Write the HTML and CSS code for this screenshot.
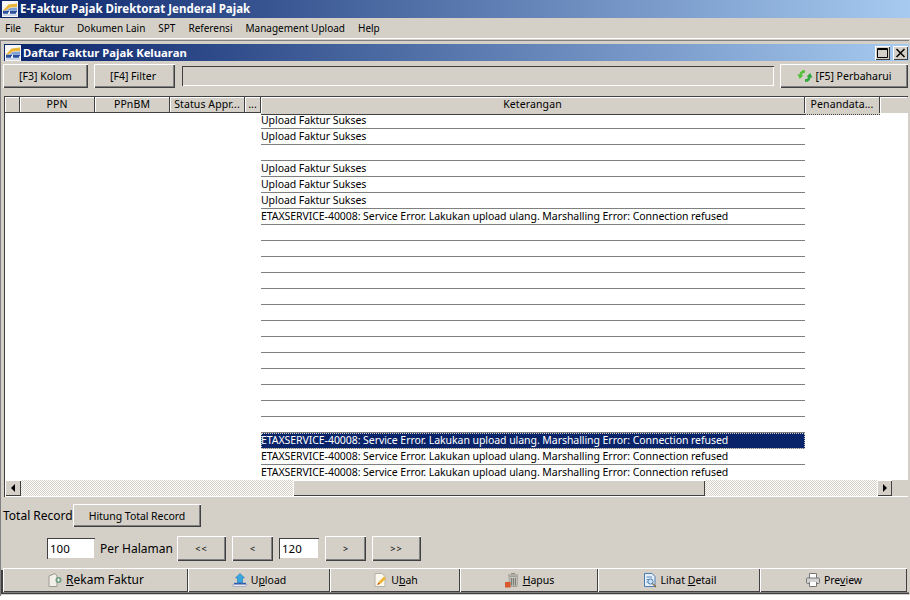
FILE: index.html
```html
<!DOCTYPE html>
<html lang="id">
<head>
<meta charset="utf-8">
<title>E-Faktur Pajak</title>
<link rel="stylesheet" href="styles.css">
</head>
<body>
<svg class="defs" width="0" height="0" aria-hidden="true">
  <symbol id="logo" viewBox="0 0 16 16">
    <rect width="16" height="16" fill="#f6f6f6"/>
    <path d="M1 9.5 L6.5 3.5 L15 2.5 L15 6 L8 6.5 L3.5 9.5Z" fill="#e9b437"/>
    <path d="M4 9.5 L8 7 L15 6.5 L15 9.5Z" fill="#7f9fd8"/>
    <path d="M1 10.5H7M1 12H6M8 10.5H15M8 12H14" stroke="#2a4f9c" stroke-width="1.3"/>
    <path d="M1 14H15" stroke="#9fb4dc"/>
  </symbol>
</svg>

<div class="shell">
<header class="app-title">
  <svg class="logo" width="16" height="16"><use href="#logo"/></svg>
  <span>E-Faktur Pajak Direktorat Jenderal Pajak</span>
</header>

<nav class="menu">
  <span>File</span><span>Faktur</span><span>Dokumen Lain</span><span>SPT</span><span>Referensi</span><span>Management Upload</span><span>Help</span>
</nav>

<main class="frame">
  <div class="win-title">
    <svg class="logo" width="16" height="16"><use href="#logo"/></svg>
    <span class="win-name">Daftar Faktur Pajak Keluaran</span>
    <button class="win-btn" aria-label="Maximize"><svg width="11" height="10" viewBox="0 0 11 10"><path d="M0.5 0.5H10.5V9.5H0.5Z M0.5 1.5H10.5" fill="none" stroke="#000"/></svg></button>
    <button class="win-btn" aria-label="Close"><svg width="11" height="10" viewBox="0 0 11 10"><path d="M1.5 1L9.5 9M9.5 1L1.5 9" fill="none" stroke="#000" stroke-width="1.5"/></svg></button>
  </div>

  <div class="toolbar">
    <button class="btn t-kolom">[F3] Kolom</button>
    <button class="btn t-filter">[F4] Filter</button>
    <div class="sunken-field"></div>
    <button class="btn t-refresh">
      <svg width="16" height="16" viewBox="0 0 16 16"><path d="M8 2A6 6 0 0 0 2.3 6.6L0.5 6.2L2.8 11L6.3 7.4L4.6 7A3.6 3.6 0 0 1 8 4.8Z" fill="#55c03a"/><path d="M8 14A6 6 0 0 0 13.7 9.4L15.5 9.8L13.2 5L9.7 8.6L11.4 9A3.6 3.6 0 0 1 8 11.2Z" fill="#2fa83e"/></svg>
      [F5] Perbaharui
    </button>
  </div>

  <div class="table">
    <div class="thead">
      <div class="th"></div>
      <div class="th">PPN</div>
      <div class="th">PPnBM</div>
      <div class="th">Status Appr...</div>
      <div class="th th-tiny">...</div>
      <div class="th th-open">Keterangan</div>
      <div class="th th-open">Penandata...</div>
      <div class="th th-open"></div>
    </div>
    <div class="tbody">
      <div class="rows">
        <div class="row first">Upload Faktur Sukses</div>
        <div class="row">Upload Faktur Sukses</div>
        <div class="row"></div>
        <div class="row">Upload Faktur Sukses</div>
        <div class="row">Upload Faktur Sukses</div>
        <div class="row">Upload Faktur Sukses</div>
        <div class="row">ETAXSERVICE-40008: Service Error. Lakukan upload ulang. Marshalling Error: Connection refused</div>
        <div class="row"></div><div class="row"></div><div class="row"></div><div class="row"></div><div class="row"></div>
        <div class="row"></div><div class="row"></div><div class="row"></div><div class="row"></div><div class="row"></div>
        <div class="row"></div><div class="row"></div><div class="row"></div>
        <div class="row selected">ETAXSERVICE-40008: Service Error. Lakukan upload ulang. Marshalling Error: Connection refused</div>
        <div class="row">ETAXSERVICE-40008: Service Error. Lakukan upload ulang. Marshalling Error: Connection refused</div>
        <div class="row last">ETAXSERVICE-40008: Service Error. Lakukan upload ulang. Marshalling Error: Connection refused</div>
      </div>
      <div class="peek"></div>
    </div>
    <div class="hscroll">
      <div class="arrow"><svg width="5" height="8" viewBox="0 0 5 8"><path d="M4 0V8L0 4Z"/></svg></div>
      <div class="track track-left"></div>
      <div class="thumb"></div>
      <div class="track track-right"></div>
      <div class="arrow arrow-right"><svg width="5" height="8" viewBox="0 0 5 8"><path d="M1 0V8L5 4Z"/></svg></div>
      <div class="corner"></div>
    </div>
  </div>

  <div class="total-row">
    <span class="total-label">Total Record</span>
    <button class="btn b-hitung">Hitung Total Record</button>
  </div>

  <div class="page-row">
    <div class="input i-size">100</div>
    <span class="per">Per Halaman</span>
    <button class="btn b-nav-wide">&lt;&lt;</button>
    <button class="btn b-nav">&lt;</button>
    <div class="input i-page">120</div>
    <button class="btn b-nav">&gt;</button>
    <button class="btn b-nav-wide">&gt;&gt;</button>
  </div>

  <div class="actions">
    <button class="action a1">
      <svg width="16" height="16" viewBox="0 0 16 16"><path d="M2 4L8 1.5L10 4V14.5H2Z" fill="#f1efe8" stroke="#9a9a92"/><circle cx="11.5" cy="8" r="3" fill="#6f9d7e"/><path d="M10 8H13M11.5 6.5V9.5" stroke="#fff"/></svg>
      <span><u>R</u>ekam Faktur</span>
    </button>
    <button class="action a2">
      <svg width="16" height="16" viewBox="0 0 16 16"><path d="M1 12.5H15L13.5 14.5H1Z" fill="#e8e8f0" stroke="#8b93b5" stroke-width=".6"/><path d="M8 1.5L12.5 6H10.5V10.5H5.5V6H3.5Z" fill="#39a6e0" stroke="#1d76b4" stroke-width=".6"/><path d="M2 11.5H14" stroke="#2c5fb0" stroke-width="1.4"/></svg>
      <span>U<u>p</u>load</span>
    </button>
    <button class="action a3">
      <svg width="16" height="16" viewBox="0 0 16 16"><path d="M3 1.5H10L13 4.5V14.5H3Z" fill="#fbf9ee" stroke="#b4b2a6"/><path d="M5 13L7 9.5L12 4.5L14 6.5L9 11.5Z" fill="#efb53a"/><path d="M5 13L6.6 10.4L7.9 11.9Z" fill="#c9521f"/></svg>
      <span>U<u>b</u>ah</span>
    </button>
    <button class="action a4">
      <svg width="16" height="16" viewBox="0 0 16 16"><path d="M4 3H14M7 1.5H11" stroke="#8d8d87" stroke-width="1.2"/><path d="M5 4.5H13.5L13 14.5H5.5Z" fill="#c8c8c0" stroke="#8d8d87" stroke-width=".7"/><path d="M7.3 6V13.5M9.3 6V13.5M11.3 6V13.5" stroke="#6d6d68"/><rect x="1" y="10" width="5.5" height="5.5" fill="#d9582b"/></svg>
      <span><u>H</u>apus</span>
    </button>
    <button class="action a5">
      <svg width="16" height="16" viewBox="0 0 16 16"><path d="M2.5 1.5H10L13 4.5V14.5H2.5Z" fill="#e6effa" stroke="#4a7cb0"/><path d="M4.5 5H10M4.5 7.5H10M4.5 10H8" stroke="#5a8ac0"/><circle cx="8.5" cy="9.5" r="2.6" fill="#cfe3f6" stroke="#4a7cb0"/><path d="M10.5 11.5L14 15" stroke="#8a6a3a" stroke-width="1.3"/></svg>
      <span>Lihat <u>D</u>etail</span>
    </button>
    <button class="action a6">
      <svg width="16" height="16" viewBox="0 0 16 16"><path d="M4.5 6V1.5H11.5V6" fill="#fff" stroke="#77777a"/><rect x="1.5" y="6" width="13" height="5.5" rx="1" fill="#d2d2d0" stroke="#77777a"/><path d="M4.5 10V14.5H11.5V10" fill="#fff" stroke="#77777a"/></svg>
      <span>Pre<u>v</u>iew</span>
    </button>
  </div>
</main>
</div>
</body>
</html>
```

FILE: styles.css
```css
* { box-sizing: border-box; }
html, body { margin: 0; height: 600px; overflow: hidden; background: #fff; }
body {
  color: #000;
  font: 10.5px/16px "Noto Sans", sans-serif;
  width: 910px;
}
.defs { display: block; height: 0; }
button { font: inherit; color: inherit; padding: 0; margin: 0; background: #d4d0c8; }

.shell {
  height: 595px;
  background: #d4d0c8;
}

.app-title {
  height: 18px;
  display: flex;
  align-items: center;
  gap: 2px;
  padding-left: 2px;
  background: linear-gradient(90deg, #0a246a, #a6caf0);
  color: #fff;
  font: bold 11.5px/16px "Noto Sans", sans-serif;
}
.logo { flex: none; }

.menu {
  height: 21px;
  display: flex;
  align-items: center;
  gap: 13px;
  padding: 0 0 1px 5px;
  border-bottom: 1px solid #fff;
  font-size: 10px;
}

.frame {
  height: 556px;
  margin: 1px 1px 0 0;
  padding: 0 0 0 3px;
  border-top: 1px solid #808080;
  border-left: 1px solid #808080;
  display: flex;
  flex-direction: column;
}

.win-title {
  height: 17px;
  margin-top: 3px;
  display: flex;
  align-items: center;
  gap: 3px;
  padding: 0 1px 0 1px;
  background: linear-gradient(90deg, #0a246a, #a6caf0);
  color: #fff;
  font: bold 11.3px/16px "Noto Sans", sans-serif;
}
.win-name { flex: 1; margin-left: -1px; }
.win-btn {
  width: 15px;
  height: 14px;
  display: flex;
  align-items: center;
  justify-content: center;
  border: 0;
  flex: none;
  box-shadow: inset 1px 1px 0 #fff, inset -1px -1px 0 #404040;
}

.btn {
  height: 24px;
  border: 0;
  background: #d4d0c8;
  box-shadow: inset 1px 1px 0 #fff, inset -1px -1px 0 #404040, inset -2px -2px 0 #808080;
  display: flex;
  align-items: center;
  justify-content: center;
  gap: 3px;
  flex: none;
}

.toolbar {
  height: 24px;
  margin: 3px 0 0 -1px;
  display: flex;
  align-items: center;
  gap: 6px;
}
.t-kolom { width: 85px; }
.t-filter { width: 81px; padding-right: 3px; }
.sunken-field {
  flex: none;
  width: 592px;
  height: 20px;
  margin-left: 1px;
  box-shadow: inset 1px 1px 0 #404040, inset -1px -1px 0 #fff;
}
.t-refresh { width: 128px; }

.table {
  margin: 8px 0 0 0;
  width: 904px;
  border-top: 1px solid #404040;
  border-left: 1px solid #404040;
  display: flex;
  flex-direction: column;
}
.thead {
  display: grid;
  grid-template-columns: 15px 75px 75px 75px 16px 544px 75px 27px;
  height: 16px;
}
.th {
  text-align: center;
  line-height: 15px;
  white-space: nowrap;
  overflow: hidden;
  letter-spacing: .1px;
  border-right: 1px solid #404040;
  box-shadow: inset 1px 1px 0 #fff;
  border-bottom: 1px solid #404040;
}
.th-open { border-bottom: 0; }
.th:last-child { border-right: 0; }

.tbody {
  height: 367px;
  background: #fff;
  overflow: hidden;
  padding-left: 256px;
  display: flex;
  align-items: flex-start;
}
.rows { width: 544px; flex: none; }
.peek {
  width: 75px;
  height: 2px;
  background: #d4d0c8;
  border-bottom: 1px dotted #404040;
}
.row {
  height: 16px;
  line-height: 15px;
  border-bottom: 1px solid #808080;
  white-space: nowrap;
  letter-spacing: -.06px;
}
.row.first { border-top: 1px solid #d4d0c8; box-shadow: inset 0 1px 0 #404040; line-height: 12px; }
.row.last { border-bottom: 0; }
.row.selected { background: #0a246a; color: #fff; outline: 1px dotted #d4d0c8; outline-offset: -1px; }

.hscroll {
  height: 17px;
  display: flex;
  background: #d4d0c8;
  border-bottom: 1px solid #fff;
}
.arrow {
  width: 16px;
  display: flex;
  align-items: center;
  justify-content: center;
  box-shadow: inset 1px 1px 0 #fff, inset -1px -1px 0 #404040;
  flex: none;
}
.arrow-right { width: 15px; }
.track {
  background: conic-gradient(#d4d0c8 25%, #fff 0 50%, #d4d0c8 0 75%, #fff 0) 0 0 / 2px 2px;
}
.track-left { width: 272px; }
.track-right { width: 172px; }
.thumb {
  width: 412px;
  box-shadow: inset 1px 1px 0 #fff, inset -1px -1px 0 #404040;
}
.corner { flex: 1; }

.total-row {
  margin: 7px 0 0 -1px;
  height: 23px;
  display: flex;
  align-items: center;
}
.total-label { width: 70px; font-size: 12px; white-space: nowrap; }
.b-hitung { width: 128px; height: 23px; letter-spacing: -.05px; }

.page-row {
  margin-top: 9px;
  height: 25px;
  display: flex;
  align-items: center;
  padding-left: 43px;
}
.input {
  height: 21px;
  background: #fff;
  box-shadow: inset 1px 1px 0 #404040, inset -1px -1px 0 #d4d0c8;
  padding: 3px 0 0 3px;
  line-height: 16px;
  font-size: 11.5px;
  flex: none;
}
.i-size { width: 48px; }
.i-page { width: 40px; margin: 0 6px; }
.per { margin-left: 5px; width: 77px; font-size: 12px; white-space: nowrap; }
.b-nav-wide { width: 49px; height: 25px; font-size: 9px; letter-spacing: 1px; }
.b-nav { width: 41px; height: 25px; font-size: 9px; }
.b-nav-wide + .b-nav { margin-left: 6px; }
.b-nav + .b-nav-wide { margin-left: 6px; }

.actions {
  margin: 7px 0 0 -1px;
  height: 24px;
  width: 906px;
  display: flex;
  box-shadow: 0 1px 0 #808080, 0 2px 0 #404040, -2px 2px 0 #404040;
}
.action {
  height: 24px;
  border: 0;
  display: flex;
  align-items: center;
  justify-content: center;
  gap: 3px;
  flex: none;
  background: #d4d0c8;
  box-shadow: inset 1px 1px 0 #fff, inset -1px -1px 0 #404040;
}
.a1 { width: 185px; font-size: 12px; }
.a2 { width: 142px; }
.a3 { width: 130px; }
.a4 { width: 138px; }
.a5 { width: 162px; }
.a6 { width: 147px; }
```
